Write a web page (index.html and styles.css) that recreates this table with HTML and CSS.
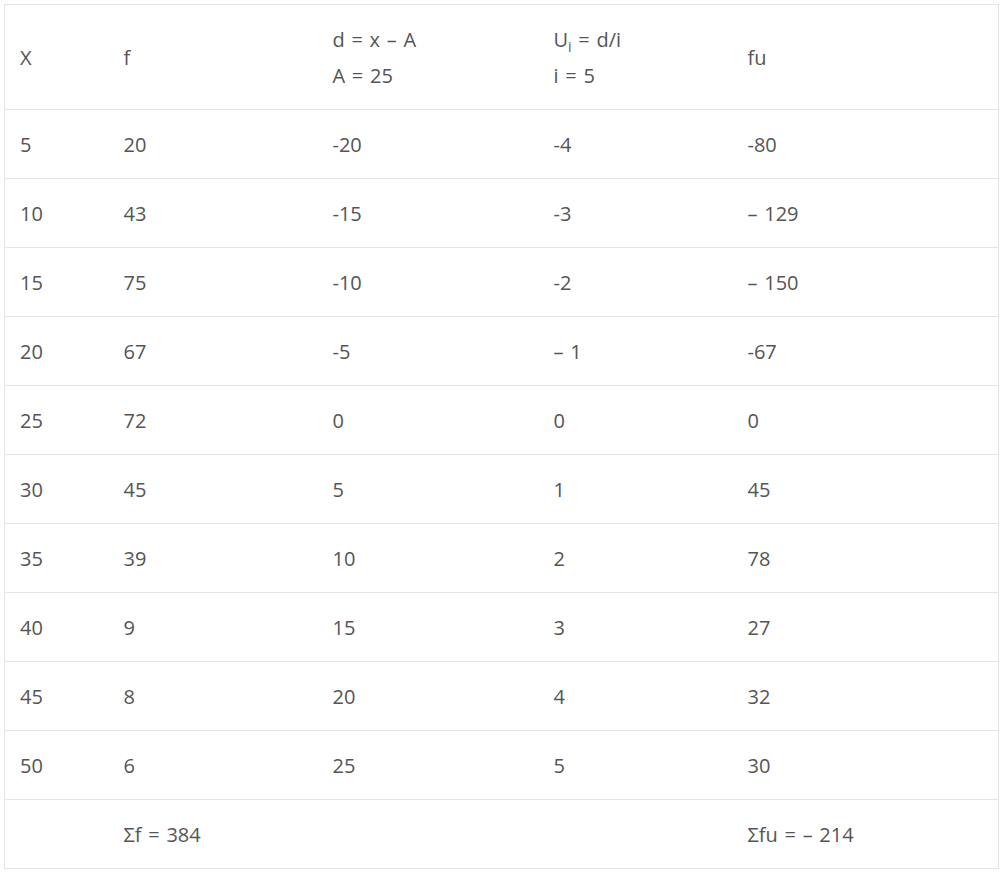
FILE: index.html
```html
<!DOCTYPE html>
<html>
<head>
<meta charset="utf-8">
<link rel="stylesheet" href="styles.css">
</head>
<body>
<div class="page">
<table class="data">
  <colgroup>
    <col class="c1"><col class="c2"><col class="c3"><col class="c4"><col class="c5">
  </colgroup>
  <tbody>
    <tr class="head">
      <td>X</td>
      <td>f</td>
      <td>d = x – A<br>A = 25</td>
      <td>U<sub>i</sub> = d/i<br>i = 5</td>
      <td>fu</td>
    </tr>
    <tr><td>5</td><td>20</td><td>-20</td><td>-4</td><td>-80</td></tr>
    <tr><td>10</td><td>43</td><td>-15</td><td>-3</td><td>– 129</td></tr>
    <tr><td>15</td><td>75</td><td>-10</td><td>-2</td><td>– 150</td></tr>
    <tr><td>20</td><td>67</td><td>-5</td><td>– 1</td><td>-67</td></tr>
    <tr><td>25</td><td>72</td><td>0</td><td>0</td><td>0</td></tr>
    <tr><td>30</td><td>45</td><td>5</td><td>1</td><td>45</td></tr>
    <tr><td>35</td><td>39</td><td>10</td><td>2</td><td>78</td></tr>
    <tr><td>40</td><td>9</td><td>15</td><td>3</td><td>27</td></tr>
    <tr><td>45</td><td>8</td><td>20</td><td>4</td><td>32</td></tr>
    <tr><td>50</td><td>6</td><td>25</td><td>5</td><td>30</td></tr>
    <tr><td></td><td>Σf = 384</td><td></td><td></td><td>Σfu = – 214</td></tr>
  </tbody>
</table>
</div>
</body>
</html>
```
FILE: styles.css
```css
html, body {
  margin: 0;
  padding: 0;
  background: #fff;
}
.page {
  padding: 4px;
}
.data {
  border-collapse: collapse;
  width: 994px;
  table-layout: fixed;
  font-family: "Open Sans", "Noto Sans", sans-serif;
  font-size: 20px;
  word-spacing: 1.5px;
  color: #555;
  border: 1px solid #e4e4e4;
}
.c1 { width: 104px; }
.c2 { width: 209px; }
.c3 { width: 221px; }
.c4 { width: 194px; }
.c5 { width: 266px; }
.data td {
  border-top: 1px solid #e4e4e4;
  border-bottom: 1px solid #e4e4e4;
  padding: 17px 15px 15px 15px;
  line-height: 36px;
  height: 36px;
  vertical-align: middle;
  text-align: left;
}
.data sub {
  font-size: 14px;
  line-height: 0;
  vertical-align: -5px;
}
```
